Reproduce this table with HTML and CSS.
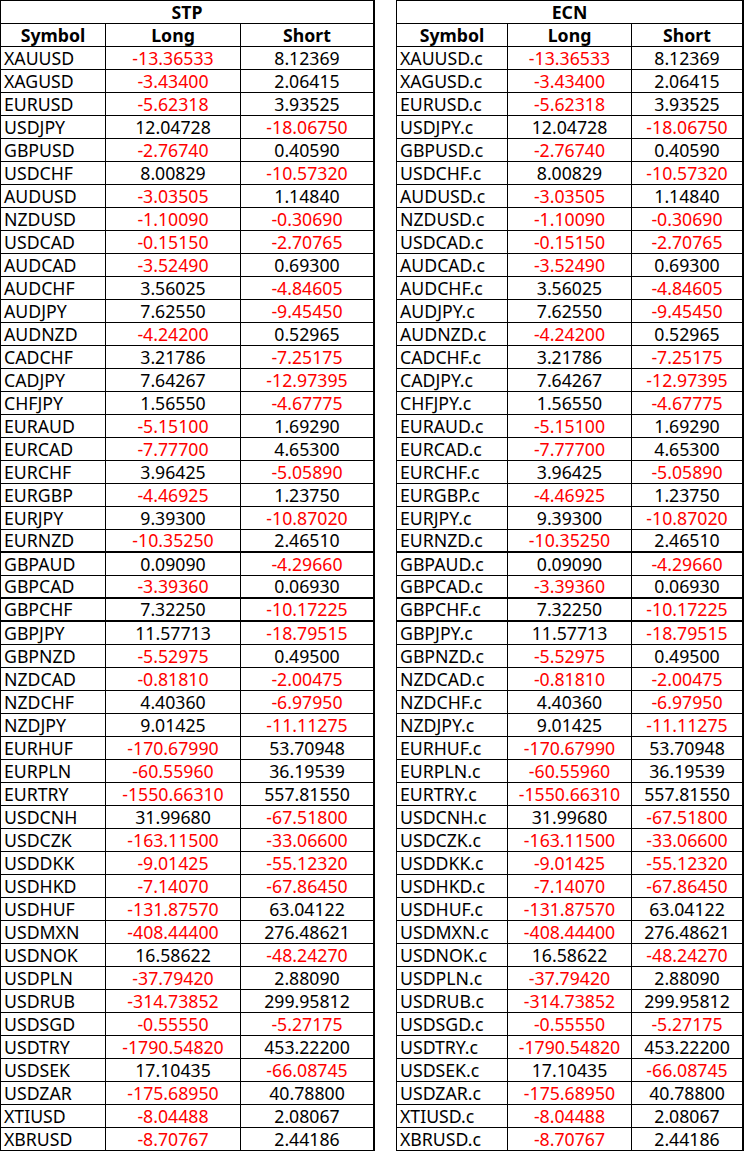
FILE: index.html
```html
<!DOCTYPE html>
<html>
<head>
<meta charset="utf-8">
<link rel="stylesheet" href="styles.css">
</head>
<body>
<div class="page">
  <div class="tbl stp">
    <div class="title">STP</div>
    <div class="row head"><div class="c">Symbol</div><div class="c">Long</div><div class="c">Short</div></div>
    <div class="row"><div class="c sym">XAUUSD</div><div class="c neg">-13.36533</div><div class="c">8.12369</div></div>
    <div class="row"><div class="c sym">XAGUSD</div><div class="c neg">-3.43400</div><div class="c">2.06415</div></div>
    <div class="row"><div class="c sym">EURUSD</div><div class="c neg">-5.62318</div><div class="c">3.93525</div></div>
    <div class="row"><div class="c sym">USDJPY</div><div class="c">12.04728</div><div class="c neg">-18.06750</div></div>
    <div class="row"><div class="c sym">GBPUSD</div><div class="c neg">-2.76740</div><div class="c">0.40590</div></div>
    <div class="row"><div class="c sym">USDCHF</div><div class="c">8.00829</div><div class="c neg">-10.57320</div></div>
    <div class="row"><div class="c sym">AUDUSD</div><div class="c neg">-3.03505</div><div class="c">1.14840</div></div>
    <div class="row"><div class="c sym">NZDUSD</div><div class="c neg">-1.10090</div><div class="c neg">-0.30690</div></div>
    <div class="row"><div class="c sym">USDCAD</div><div class="c neg">-0.15150</div><div class="c neg">-2.70765</div></div>
    <div class="row"><div class="c sym">AUDCAD</div><div class="c neg">-3.52490</div><div class="c">0.69300</div></div>
    <div class="row"><div class="c sym">AUDCHF</div><div class="c">3.56025</div><div class="c neg">-4.84605</div></div>
    <div class="row"><div class="c sym">AUDJPY</div><div class="c">7.62550</div><div class="c neg">-9.45450</div></div>
    <div class="row"><div class="c sym">AUDNZD</div><div class="c neg">-4.24200</div><div class="c">0.52965</div></div>
    <div class="row"><div class="c sym">CADCHF</div><div class="c">3.21786</div><div class="c neg">-7.25175</div></div>
    <div class="row"><div class="c sym">CADJPY</div><div class="c">7.64267</div><div class="c neg">-12.97395</div></div>
    <div class="row"><div class="c sym">CHFJPY</div><div class="c">1.56550</div><div class="c neg">-4.67775</div></div>
    <div class="row"><div class="c sym">EURAUD</div><div class="c neg">-5.15100</div><div class="c">1.69290</div></div>
    <div class="row"><div class="c sym">EURCAD</div><div class="c neg">-7.77700</div><div class="c">4.65300</div></div>
    <div class="row"><div class="c sym">EURCHF</div><div class="c">3.96425</div><div class="c neg">-5.05890</div></div>
    <div class="row"><div class="c sym">EURGBP</div><div class="c neg">-4.46925</div><div class="c">1.23750</div></div>
    <div class="row"><div class="c sym">EURJPY</div><div class="c">9.39300</div><div class="c neg">-10.87020</div></div>
    <div class="row sep"><div class="c sym">EURNZD</div><div class="c neg">-10.35250</div><div class="c">2.46510</div></div>
    <div class="row"><div class="c sym">GBPAUD</div><div class="c">0.09090</div><div class="c neg">-4.29660</div></div>
    <div class="row sep"><div class="c sym">GBPCAD</div><div class="c neg">-3.39360</div><div class="c">0.06930</div></div>
    <div class="row sep"><div class="c sym">GBPCHF</div><div class="c">7.32250</div><div class="c neg">-10.17225</div></div>
    <div class="row"><div class="c sym">GBPJPY</div><div class="c">11.57713</div><div class="c neg">-18.79515</div></div>
    <div class="row"><div class="c sym">GBPNZD</div><div class="c neg">-5.52975</div><div class="c">0.49500</div></div>
    <div class="row"><div class="c sym">NZDCAD</div><div class="c neg">-0.81810</div><div class="c neg">-2.00475</div></div>
    <div class="row"><div class="c sym">NZDCHF</div><div class="c">4.40360</div><div class="c neg">-6.97950</div></div>
    <div class="row"><div class="c sym">NZDJPY</div><div class="c">9.01425</div><div class="c neg">-11.11275</div></div>
    <div class="row"><div class="c sym">EURHUF</div><div class="c neg">-170.67990</div><div class="c">53.70948</div></div>
    <div class="row"><div class="c sym">EURPLN</div><div class="c neg">-60.55960</div><div class="c">36.19539</div></div>
    <div class="row"><div class="c sym">EURTRY</div><div class="c neg">-1550.66310</div><div class="c">557.81550</div></div>
    <div class="row"><div class="c sym">USDCNH</div><div class="c">31.99680</div><div class="c neg">-67.51800</div></div>
    <div class="row"><div class="c sym">USDCZK</div><div class="c neg">-163.11500</div><div class="c neg">-33.06600</div></div>
    <div class="row"><div class="c sym">USDDKK</div><div class="c neg">-9.01425</div><div class="c neg">-55.12320</div></div>
    <div class="row"><div class="c sym">USDHKD</div><div class="c neg">-7.14070</div><div class="c neg">-67.86450</div></div>
    <div class="row"><div class="c sym">USDHUF</div><div class="c neg">-131.87570</div><div class="c">63.04122</div></div>
    <div class="row"><div class="c sym">USDMXN</div><div class="c neg">-408.44400</div><div class="c">276.48621</div></div>
    <div class="row"><div class="c sym">USDNOK</div><div class="c">16.58622</div><div class="c neg">-48.24270</div></div>
    <div class="row"><div class="c sym">USDPLN</div><div class="c neg">-37.79420</div><div class="c">2.88090</div></div>
    <div class="row"><div class="c sym">USDRUB</div><div class="c neg">-314.73852</div><div class="c">299.95812</div></div>
    <div class="row"><div class="c sym">USDSGD</div><div class="c neg">-0.55550</div><div class="c neg">-5.27175</div></div>
    <div class="row"><div class="c sym">USDTRY</div><div class="c neg">-1790.54820</div><div class="c">453.22200</div></div>
    <div class="row"><div class="c sym">USDSEK</div><div class="c">17.10435</div><div class="c neg">-66.08745</div></div>
    <div class="row"><div class="c sym">USDZAR</div><div class="c neg">-175.68950</div><div class="c">40.78800</div></div>
    <div class="row"><div class="c sym">XTIUSD</div><div class="c neg">-8.04488</div><div class="c">2.08067</div></div>
    <div class="row"><div class="c sym">XBRUSD</div><div class="c neg">-8.70767</div><div class="c">2.44186</div></div>
  </div>
  <div class="tbl ecn">
    <div class="title">ECN</div>
    <div class="row head"><div class="c">Symbol</div><div class="c">Long</div><div class="c">Short</div></div>
    <div class="row"><div class="c sym">XAUUSD.c</div><div class="c neg">-13.36533</div><div class="c">8.12369</div></div>
    <div class="row"><div class="c sym">XAGUSD.c</div><div class="c neg">-3.43400</div><div class="c">2.06415</div></div>
    <div class="row"><div class="c sym">EURUSD.c</div><div class="c neg">-5.62318</div><div class="c">3.93525</div></div>
    <div class="row"><div class="c sym">USDJPY.c</div><div class="c">12.04728</div><div class="c neg">-18.06750</div></div>
    <div class="row"><div class="c sym">GBPUSD.c</div><div class="c neg">-2.76740</div><div class="c">0.40590</div></div>
    <div class="row"><div class="c sym">USDCHF.c</div><div class="c">8.00829</div><div class="c neg">-10.57320</div></div>
    <div class="row"><div class="c sym">AUDUSD.c</div><div class="c neg">-3.03505</div><div class="c">1.14840</div></div>
    <div class="row"><div class="c sym">NZDUSD.c</div><div class="c neg">-1.10090</div><div class="c neg">-0.30690</div></div>
    <div class="row"><div class="c sym">USDCAD.c</div><div class="c neg">-0.15150</div><div class="c neg">-2.70765</div></div>
    <div class="row"><div class="c sym">AUDCAD.c</div><div class="c neg">-3.52490</div><div class="c">0.69300</div></div>
    <div class="row"><div class="c sym">AUDCHF.c</div><div class="c">3.56025</div><div class="c neg">-4.84605</div></div>
    <div class="row"><div class="c sym">AUDJPY.c</div><div class="c">7.62550</div><div class="c neg">-9.45450</div></div>
    <div class="row"><div class="c sym">AUDNZD.c</div><div class="c neg">-4.24200</div><div class="c">0.52965</div></div>
    <div class="row"><div class="c sym">CADCHF.c</div><div class="c">3.21786</div><div class="c neg">-7.25175</div></div>
    <div class="row"><div class="c sym">CADJPY.c</div><div class="c">7.64267</div><div class="c neg">-12.97395</div></div>
    <div class="row"><div class="c sym">CHFJPY.c</div><div class="c">1.56550</div><div class="c neg">-4.67775</div></div>
    <div class="row"><div class="c sym">EURAUD.c</div><div class="c neg">-5.15100</div><div class="c">1.69290</div></div>
    <div class="row"><div class="c sym">EURCAD.c</div><div class="c neg">-7.77700</div><div class="c">4.65300</div></div>
    <div class="row"><div class="c sym">EURCHF.c</div><div class="c">3.96425</div><div class="c neg">-5.05890</div></div>
    <div class="row"><div class="c sym">EURGBP.c</div><div class="c neg">-4.46925</div><div class="c">1.23750</div></div>
    <div class="row"><div class="c sym">EURJPY.c</div><div class="c">9.39300</div><div class="c neg">-10.87020</div></div>
    <div class="row sep"><div class="c sym">EURNZD.c</div><div class="c neg">-10.35250</div><div class="c">2.46510</div></div>
    <div class="row"><div class="c sym">GBPAUD.c</div><div class="c">0.09090</div><div class="c neg">-4.29660</div></div>
    <div class="row sep"><div class="c sym">GBPCAD.c</div><div class="c neg">-3.39360</div><div class="c">0.06930</div></div>
    <div class="row sep"><div class="c sym">GBPCHF.c</div><div class="c">7.32250</div><div class="c neg">-10.17225</div></div>
    <div class="row"><div class="c sym">GBPJPY.c</div><div class="c">11.57713</div><div class="c neg">-18.79515</div></div>
    <div class="row"><div class="c sym">GBPNZD.c</div><div class="c neg">-5.52975</div><div class="c">0.49500</div></div>
    <div class="row"><div class="c sym">NZDCAD.c</div><div class="c neg">-0.81810</div><div class="c neg">-2.00475</div></div>
    <div class="row"><div class="c sym">NZDCHF.c</div><div class="c">4.40360</div><div class="c neg">-6.97950</div></div>
    <div class="row"><div class="c sym">NZDJPY.c</div><div class="c">9.01425</div><div class="c neg">-11.11275</div></div>
    <div class="row"><div class="c sym">EURHUF.c</div><div class="c neg">-170.67990</div><div class="c">53.70948</div></div>
    <div class="row"><div class="c sym">EURPLN.c</div><div class="c neg">-60.55960</div><div class="c">36.19539</div></div>
    <div class="row"><div class="c sym">EURTRY.c</div><div class="c neg">-1550.66310</div><div class="c">557.81550</div></div>
    <div class="row"><div class="c sym">USDCNH.c</div><div class="c">31.99680</div><div class="c neg">-67.51800</div></div>
    <div class="row"><div class="c sym">USDCZK.c</div><div class="c neg">-163.11500</div><div class="c neg">-33.06600</div></div>
    <div class="row"><div class="c sym">USDDKK.c</div><div class="c neg">-9.01425</div><div class="c neg">-55.12320</div></div>
    <div class="row"><div class="c sym">USDHKD.c</div><div class="c neg">-7.14070</div><div class="c neg">-67.86450</div></div>
    <div class="row"><div class="c sym">USDHUF.c</div><div class="c neg">-131.87570</div><div class="c">63.04122</div></div>
    <div class="row"><div class="c sym">USDMXN.c</div><div class="c neg">-408.44400</div><div class="c">276.48621</div></div>
    <div class="row"><div class="c sym">USDNOK.c</div><div class="c">16.58622</div><div class="c neg">-48.24270</div></div>
    <div class="row"><div class="c sym">USDPLN.c</div><div class="c neg">-37.79420</div><div class="c">2.88090</div></div>
    <div class="row"><div class="c sym">USDRUB.c</div><div class="c neg">-314.73852</div><div class="c">299.95812</div></div>
    <div class="row"><div class="c sym">USDSGD.c</div><div class="c neg">-0.55550</div><div class="c neg">-5.27175</div></div>
    <div class="row"><div class="c sym">USDTRY.c</div><div class="c neg">-1790.54820</div><div class="c">453.22200</div></div>
    <div class="row"><div class="c sym">USDSEK.c</div><div class="c">17.10435</div><div class="c neg">-66.08745</div></div>
    <div class="row"><div class="c sym">USDZAR.c</div><div class="c neg">-175.68950</div><div class="c">40.78800</div></div>
    <div class="row"><div class="c sym">XTIUSD.c</div><div class="c neg">-8.04488</div><div class="c">2.08067</div></div>
    <div class="row"><div class="c sym">XBRUSD.c</div><div class="c neg">-8.70767</div><div class="c">2.44186</div></div>
  </div>
</div>
</body>
</html>
```
FILE: styles.css
```css
html, body {
  margin: 0;
  padding: 0;
  background: #ffffff;
}

body {
  font-family: "Noto Sans", "Open Sans", sans-serif;
  font-size: 17.7px;
  color: #000000;
}

.page {
  display: flex;
  align-items: flex-start;
  gap: 21px;
  width: 744px;
}

.tbl {
  border-top: 1px solid #000;
  border-left: 1px solid #000;
  border-right: 2px solid #000;
}

.stp { --cols: 105px 135px 132px; }
.ecn { --cols: 111px 124px 110px; }

.title {
  height: 23px;
  box-sizing: border-box;
  border-bottom: 1px solid #000;
  line-height: 22px;
  text-align: center;
  font-weight: 700;
}

.row {
  display: grid;
  grid-template-columns: var(--cols);
}

.c {
  height: 23px;
  box-sizing: border-box;
  border-bottom: 1px solid #000;
  border-right: 1px solid #000;
  line-height: 22px;
  text-align: center;
  white-space: nowrap;
}

.c:last-child {
  border-right: none;
}

.head .c {
  font-weight: 700;
}

.sym {
  text-align: left;
  padding-left: 3px;
}

.neg {
  color: #ff0000;
}

.sep .c {
  border-bottom-width: 2px;
  line-height: 21px;
}
```
